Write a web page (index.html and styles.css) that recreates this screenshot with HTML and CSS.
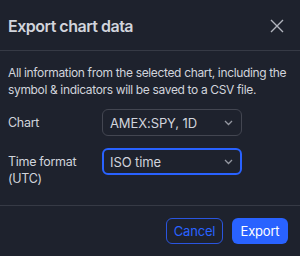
FILE: index.html
```html
<!DOCTYPE html>
<html>
<head>
<meta charset="utf-8">
<link rel="stylesheet" href="styles.css">
</head>
<body>
<div class="dialog">
  <div class="header">
    <div class="title">Export chart data</div>
    <svg class="close" width="14" height="14" viewBox="0 0 14 14"><path d="M1 1L13 13M13 1L1 13" stroke="#b2b5be" stroke-width="1.4" fill="none"/></svg>
  </div>
  <div class="body">
    <p class="desc">All information from the selected chart, including the symbol &amp; indicators will be saved to a CSV file.</p>
    <div class="form">
      <div class="label">Chart</div>
      <div class="select">
        <span>AMEX:SPY, 1D</span>
        <svg class="chev" width="9" height="6" viewBox="0 0 9 6"><path d="M1 1L4.5 4.5L8 1" stroke="#9598a1" stroke-width="1.3" fill="none"/></svg>
      </div>
      <div class="label">Time format (UTC)</div>
      <div class="select active">
        <span>ISO time</span>
        <svg class="chev" width="9" height="6" viewBox="0 0 9 6"><path d="M1 1L4.5 4.5L8 1" stroke="#9598a1" stroke-width="1.3" fill="none"/></svg>
      </div>
    </div>
  </div>
  <div class="footer">
    <button class="btn cancel">Cancel</button>
    <button class="btn export">Export</button>
  </div>
</div>
</body>
</html>
```
FILE: styles.css
```css
html, body {
  margin: 0;
  padding: 0;
  background: #1e222d;
}
body {
  font-family: Inter, "Noto Sans", sans-serif;
  color: #d1d4dc;
}
.dialog {
  width: 300px;
  height: 256px;
  background: #1e222d;
  display: flex;
  flex-direction: column;
}
.header {
  height: 51px;
  box-sizing: border-box;
  padding: 1px 16px 0 8px;
  display: flex;
  align-items: center;
  justify-content: space-between;
  border-bottom: 1px solid #363a45;
}
.title {
  font-size: 16px;
  font-weight: 600;
  color: #d1d4dc;
  letter-spacing: -0.5px;
}
.close {
  display: block;
}
.body {
  height: 155px;
  box-sizing: border-box;
  padding: 13px 8px 0 8px;
  border-bottom: 1px solid #363a45;
}
.desc {
  margin: 0;
  font-size: 12px;
  line-height: 17px;
  letter-spacing: -0.35px;
  color: #d1d4dc;
}
.form {
  margin-top: 11px;
  display: grid;
  grid-template-columns: 94px 140px;
  row-gap: 12px;
}
.label {
  font-size: 12.5px;
  line-height: 17px;
  letter-spacing: -0.3px;
  padding-top: 5px;
  padding-right: 10px;
}
.select {
  height: 27px;
  box-sizing: border-box;
  border: 1px solid #434651;
  border-radius: 6px;
  display: flex;
  align-items: center;
  justify-content: space-between;
  padding: 0 8px 0 7px;
  font-size: 13px;
  letter-spacing: -0.1px;
}
.select.active {
  border: 2px solid #2962ff;
  padding: 0 7px 0 6px;
}
.chev {
  display: block;
}
.footer {
  flex: 1;
  display: flex;
  justify-content: flex-end;
  align-items: center;
  gap: 9px;
  padding: 0 12px 0 0;
}
.btn {
  height: 26px;
  box-sizing: border-box;
  border-radius: 6px;
  font-family: Inter, "Noto Sans", sans-serif;
  font-size: 13px;
  letter-spacing: -0.2px;
  padding: 0;
  cursor: pointer;
}
.cancel {
  width: 57px;
  background: transparent;
  border: 1px solid #2a55e0;
  color: #2962ff;
}
.export {
  width: 56px;
  background: #2962ff;
  border: none;
  color: #ffffff;
}
```
